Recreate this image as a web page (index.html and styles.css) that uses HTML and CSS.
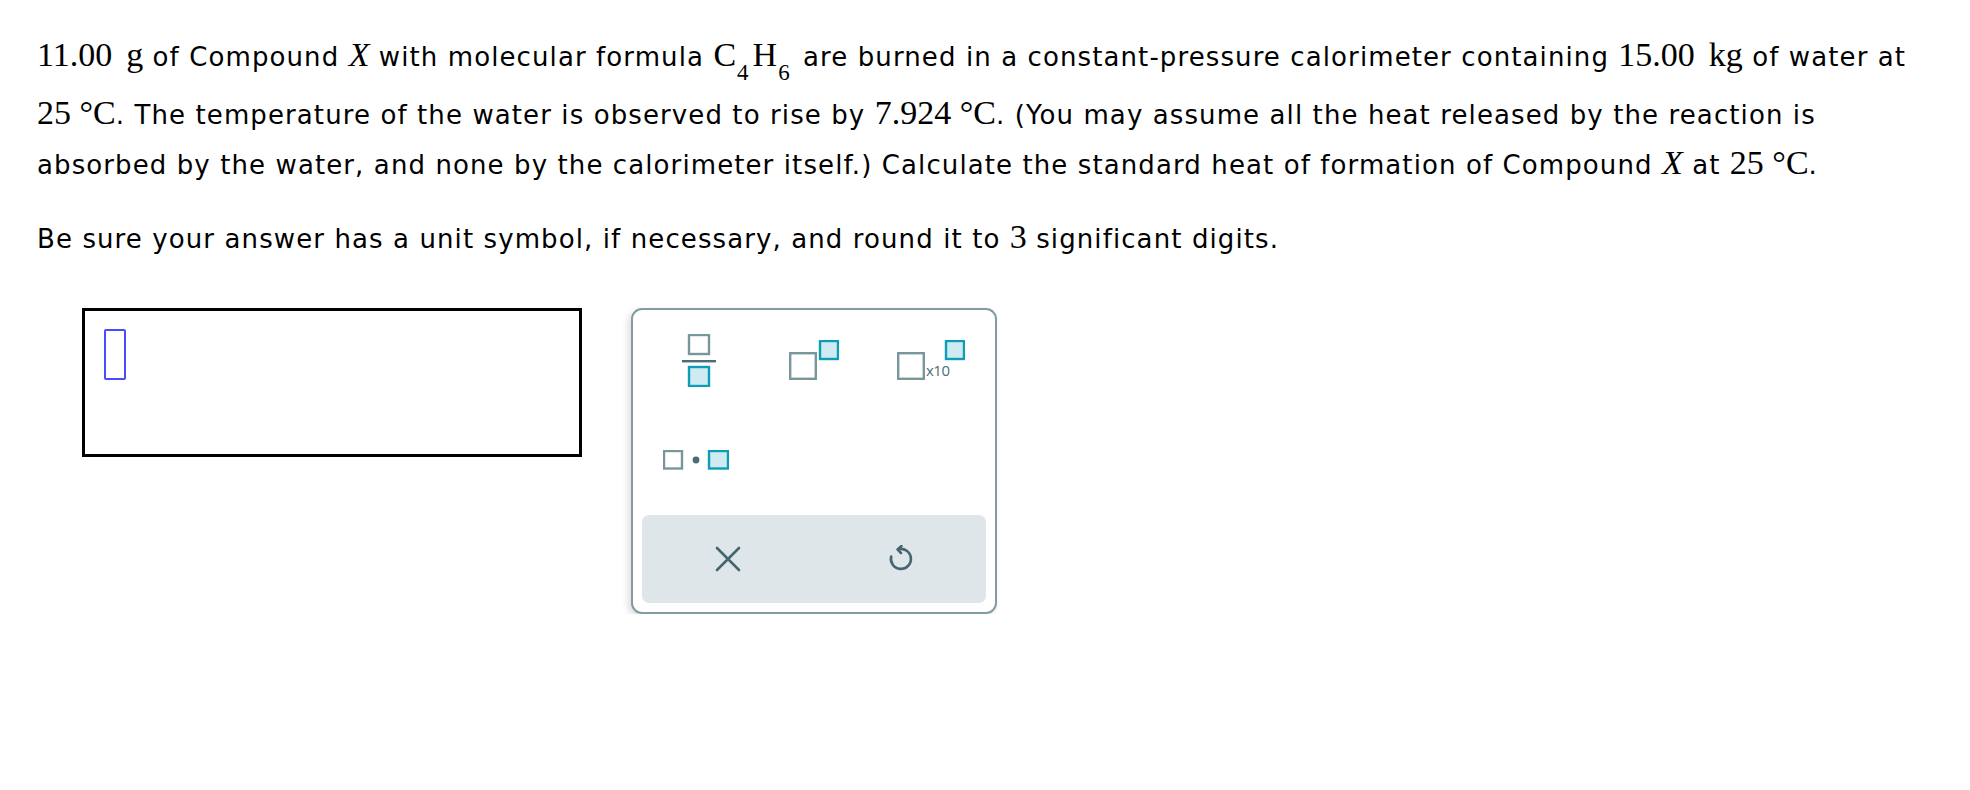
FILE: index.html
```html
<!DOCTYPE html>
<html>
<head>
<meta charset="utf-8">
<link rel="stylesheet" href="styles.css">
</head>
<body>
<div class="page">
  <p class="question"><span class="m">11.00<span class="unit">g</span></span> of Compound <span class="m it">X</span> with molecular formula <span class="m">C<sub class="sb">4</sub>H<sub class="sb">6</sub></span> are burned in a constant-pressure calorimeter containing <span class="m">15.00<span class="unit">kg</span></span> of water at <span class="m">25 °C</span>. The temperature of the water is observed to rise by <span class="m">7.924 °C</span>. (You may assume all the heat released by the reaction is absorbed by the water, and none by the calorimeter itself.) Calculate the standard heat of formation of Compound <span class="m it">X</span> at <span class="m">25 °C</span>.</p>
  <p class="note">Be sure your answer has a unit symbol, if necessary, and round it to <span class="m">3</span> significant digits.</p>
  <div class="answer-row">
    <div class="answer"><span class="cursor"></span></div>
    <div class="palette">
      <div class="keys">
        <div class="key">
          <svg width="34" height="53" viewBox="0 0 34 53">
            <rect x="7" y="1" width="20" height="19" class="box-gray"/>
            <rect x="0" y="26" width="34" height="2.4" class="bar"/>
            <rect x="7" y="33" width="20" height="19" class="box-teal"/>
          </svg>
        </div>
        <div class="key">
          <svg width="50" height="40" viewBox="0 0 50 40">
            <rect x="1.2" y="13.2" width="25.6" height="25.6" class="box-gray"/>
            <rect x="31" y="1" width="18" height="18" class="box-teal"/>
          </svg>
        </div>
        <div class="key key-x10">
          <svg width="68" height="40" viewBox="0 0 68 40">
            <rect x="1.2" y="13.2" width="25.6" height="25.6" class="box-gray"/>
            <text x="29" y="36" class="x10">x10</text>
            <rect x="49" y="1" width="18" height="18" class="box-teal"/>
          </svg>
        </div>
        <div class="key key-dot">
          <svg width="66" height="20" viewBox="0 0 66 20">
            <rect x="1" y="1" width="18" height="17.5" class="box-gray"/>
            <circle cx="33" cy="10" r="3.4" class="dot"/>
            <rect x="46" y="1" width="19" height="17.5" class="box-teal"/>
          </svg>
        </div>
      </div>
      <div class="actions">
        <div class="action">
          <svg width="26" height="26" viewBox="0 0 26 26">
            <path d="M2 2 L24 24 M24 2 L2 24" class="ico"/>
          </svg>
        </div>
        <div class="action">
          <svg width="28" height="28" viewBox="0 0 28 28">
            <path d="M5.2 11.5 A10 10 0 1 0 12.5 4.2" class="ico"/>
            <path d="M15.5 1 L11.5 4.4 L15 8" class="ico"/>
          </svg>
        </div>
      </div>
    </div>
  </div>
</div>
</body>
</html>
```

FILE: styles.css
```css
html, body {
  margin: 0;
  padding: 0;
  background: #ffffff;
}

.page {
  padding: 32px 0 0 37px;
  font-family: "DejaVu Sans", Verdana, sans-serif;
  font-size: 26px;
  letter-spacing: 1.1px;
  color: #000000;
}

.question {
  margin: 0;
  width: 1890px;
  line-height: 50px;
}

.note {
  margin: 24px 0 0 0;
  line-height: 50px;
}

.m {
  font-family: "Liberation Serif", "Times New Roman", serif;
  font-size: 34px;
  line-height: 1;
  letter-spacing: 0;
}

.it {
  font-style: italic;
}

.unit {
  margin-left: 14px;
}

.sb {
  font-size: 23px;
  line-height: 35px;
  vertical-align: -14px;
  margin-left: 1px;
  margin-right: 4px;
}

.answer-row {
  display: flex;
  align-items: flex-start;
  margin-top: 44px;
  margin-left: 45px;
  gap: 49px;
  letter-spacing: 0;
}

.answer {
  box-sizing: border-box;
  width: 500px;
  height: 149px;
  border: 3px solid #000000;
  padding: 18px 0 0 19px;
}

.cursor {
  display: block;
  box-sizing: border-box;
  width: 22px;
  height: 51px;
  border: 2px solid #4a4aff;
  border-radius: 2px;
}

.palette {
  box-sizing: border-box;
  width: 366px;
  height: 306px;
  border: 2px solid #819ca3;
  border-radius: 11px;
  padding: 0 9px;
  background: #ffffff;
  box-shadow: -3px 3px 7px rgba(0, 0, 0, 0.13);
}

.keys {
  display: grid;
  grid-template-columns: repeat(3, 1fr);
  grid-template-rows: 100px 100px;
  margin-bottom: 5px;
}

.key {
  display: flex;
  align-items: center;
  justify-content: center;
}

.key-dot {
  padding-right: 6px;
}

.key-x10 {
  padding-left: 5px;
}

.box-gray {
  fill: #ffffff;
  stroke: #7a969d;
  stroke-width: 2.4;
}

.box-teal {
  fill: #cdebf1;
  stroke: #0e9db7;
  stroke-width: 2.4;
}

.bar {
  fill: #4c6b75;
}

.dot {
  fill: #4c6b75;
}

.x10 {
  font-family: "Open Sans", "DejaVu Sans", sans-serif;
  font-size: 15px;
  fill: #4f6d76;
  letter-spacing: -0.5px;
}

.actions {
  display: grid;
  grid-template-columns: 1fr 1fr;
  height: 88px;
  background: #dfe6e9;
  border-radius: 7px;
}

.action {
  display: flex;
  align-items: center;
  justify-content: center;
}

.ico {
  fill: none;
  stroke: #456670;
  stroke-width: 2.6;
  stroke-linecap: round;
  stroke-linejoin: round;
}
```
